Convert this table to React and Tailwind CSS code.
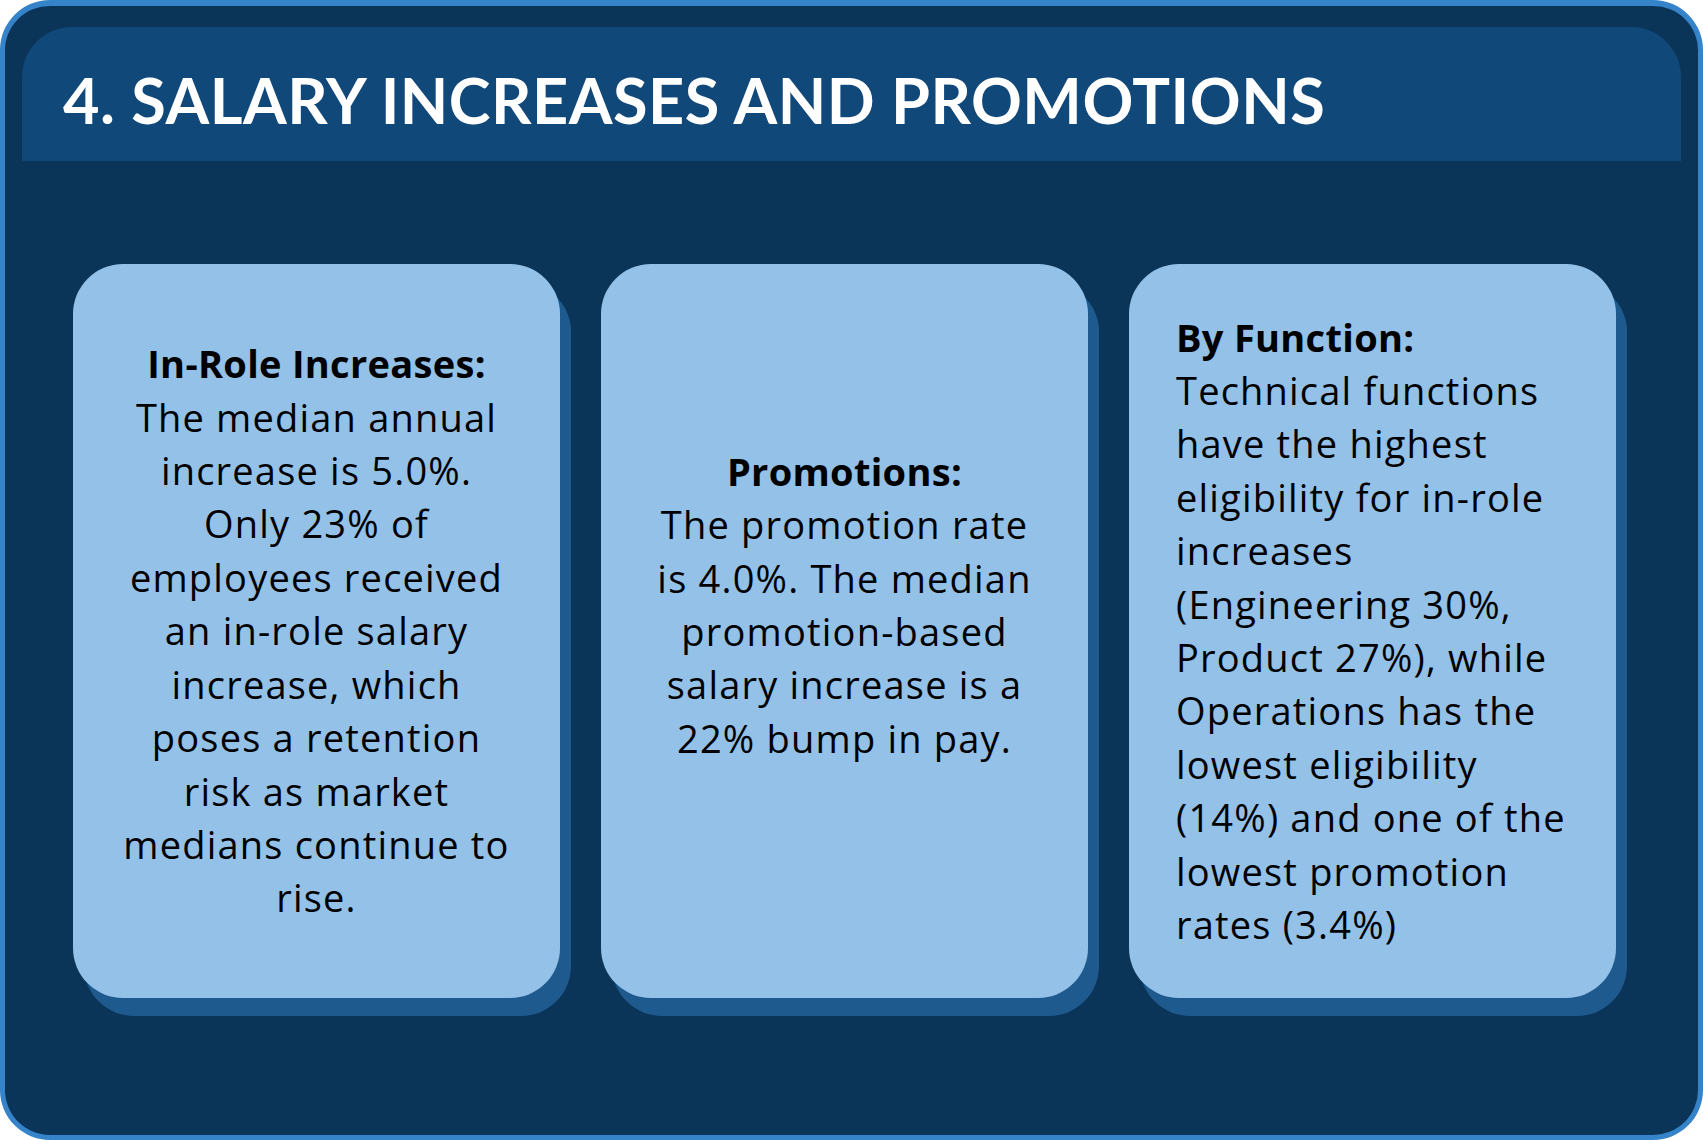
const cards = [
  {
    title: "In-Role Increases:",
    lines: [
      "The median annual",
      "increase is 5.0%.",
      "Only 23% of",
      "employees received",
      "an in-role salary",
      "increase, which",
      "poses a retention",
      "risk as market",
      "medians continue to",
      "rise.",
    ],
    align: "text-center",
    extra: "",
  },
  {
    title: "Promotions:",
    lines: [
      "The promotion rate",
      "is 4.0%. The median",
      "promotion-based",
      "salary increase is a",
      "22% bump in pay.",
    ],
    align: "text-center",
    extra: "pb-[52px]",
  },
  {
    title: "By Function:",
    lines: [
      "Technical functions",
      "have the highest",
      "eligibility for in-role",
      "increases",
      "(Engineering 30%,",
      "Product 27%), while",
      "Operations has the",
      "lowest eligibility",
      "(14%) and one of the",
      "lowest promotion",
      "rates (3.4%)",
    ],
    align: "text-left",
    extra: "",
  },
];

const Card = ({ title, lines, align, extra }) => {
  return (
    <div
      className={`flex h-[734px] w-[487px] shrink-0 flex-col justify-center rounded-[50px] bg-[#94c1e7] px-[47px] shadow-[11px_18px_0_0_#1f5a8f] ${extra}`}
    >
      <div
        className={`${align} font-['Open_Sans','Lato',sans-serif] text-[38px] leading-[53.4px] text-black`}
      >
        <div className="font-bold tracking-[0.3px] whitespace-nowrap">{title}</div>
        {lines.map((line) => (
          <div key={line} className="tracking-[1.2px] whitespace-nowrap">
            {line}
          </div>
        ))}
      </div>
    </div>
  );
};

const App = () => {
  return (
    <div className="h-[1140px] w-[1703px] bg-white font-['Lato','Open_Sans',sans-serif]">
      <div className="flex h-full w-full flex-col rounded-[50px] border-[5px] border-t-[6px] border-[#3583c9] bg-[#0b3558]">
        <header className="mx-[17px] mt-[21px] flex h-[134px] items-center rounded-t-[50px] bg-[#11487a] pl-[41px] pt-[10px]">
          <h1 className="text-[63px] font-bold leading-none tracking-[0.5px] text-white">
            4. SALARY INCREASES AND PROMOTIONS
          </h1>
        </header>
        <div className="mt-[103px] flex gap-[41px] pl-[68px]">
          {cards.map((card) => (
            <Card key={card.title} {...card} />
          ))}
        </div>
      </div>
    </div>
  );
};

export default App;
